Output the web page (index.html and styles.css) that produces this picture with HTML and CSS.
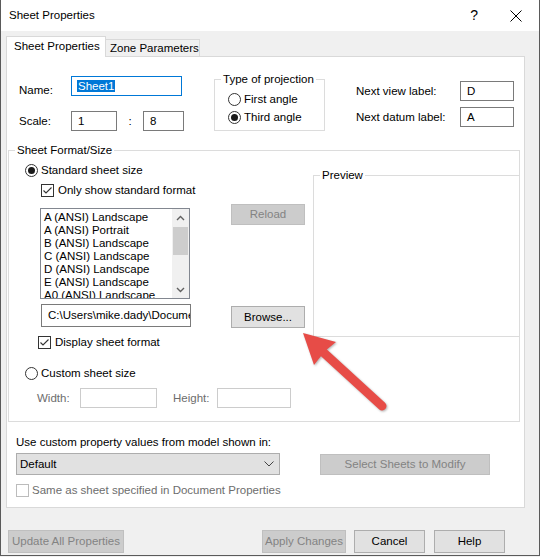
FILE: index.html
```html
<!DOCTYPE html>
<html lang="en">
<head>
    <meta charset="UTF-8">
    <title>Sheet Properties</title>
    <link rel="stylesheet" href="styles.css">
</head>
<body>
    <div class="window">
        <div class="titlebar">
            <span class="title">Sheet Properties</span>
            <span class="help">?</span>
            <svg class="close" width="12" height="12" viewBox="0 0 12 12">
                <path d="M0.5 0.5 L11.5 11.5 M11.5 0.5 L0.5 11.5" stroke="#000" stroke-width="1" fill="none"/>
            </svg>
        </div>

        <div class="tabs">
            <div class="tab active">Sheet Properties</div>
            <div class="tab">Zone Parameters</div>
        </div>

        <div class="panel">
            <!-- name, scale, projection, labels -->
            <div class="top">
                <div class="name-scale">
                    <div class="row name-row">
                        <span class="lbl">Name:</span>
                        <div class="input name-input"><span class="selected">Sheet1</span></div>
                    </div>
                    <div class="row scale-row">
                        <span class="lbl">Scale:</span>
                        <div class="input scale-a">1</div>
                        <span class="colon">:</span>
                        <div class="input scale-b">8</div>
                    </div>
                </div>

                <div class="group projection">
                    <div class="group-title">Type of projection</div>
                    <div class="option first"><span class="radio"></span>First angle</div>
                    <div class="option second"><span class="radio on"></span>Third angle</div>
                </div>

                <div class="labels">
                    <div class="row">
                        <span class="lbl-wide">Next view label:</span>
                        <div class="input short">D</div>
                    </div>
                    <div class="row datum-row">
                        <span class="lbl-wide">Next datum label:</span>
                        <div class="input short">A</div>
                    </div>
                </div>
            </div>

            <!-- sheet format / size -->
            <div class="group format">
                <div class="group-title">Sheet Format/Size</div>
                <div class="format-body">
                    <div class="format-left">
                        <div class="option"><span class="radio on"></span>Standard sheet size</div>
                        <div class="option only-std">
                            <span class="check">
                                <svg width="11" height="11" viewBox="0 0 11 11"><polyline points="1.5,5.5 4,8 9.5,2.5" fill="none" stroke="#333" stroke-width="1.1"/></svg>
                            </span>Only show standard format
                        </div>
                        <div class="list">
                            <div class="list-items">
                                <div>A (ANSI) Landscape</div>
                                <div>A (ANSI) Portrait</div>
                                <div>B (ANSI) Landscape</div>
                                <div>C (ANSI) Landscape</div>
                                <div>D (ANSI) Landscape</div>
                                <div>E (ANSI) Landscape</div>
                                <div>A0 (ANSI) Landscape</div>
                            </div>
                            <div class="scrollbar">
                                <div class="scroll-btn">
                                    <svg width="9" height="6" viewBox="0 0 9 6"><polyline points="1,5 4.5,1.5 8,5" fill="none" stroke="#606060" stroke-width="1.4"/></svg>
                                </div>
                                <div class="thumb"></div>
                                <div class="scroll-btn down">
                                    <svg width="9" height="6" viewBox="0 0 9 6"><polyline points="1,1 4.5,4.5 8,1" fill="none" stroke="#606060" stroke-width="1.4"/></svg>
                                </div>
                            </div>
                        </div>
                        <div class="input path">C:\Users\mike.dady\Docume</div>
                        <div class="option display-fmt">
                            <span class="check">
                                <svg width="11" height="11" viewBox="0 0 11 11"><polyline points="1.5,5.5 4,8 9.5,2.5" fill="none" stroke="#333" stroke-width="1.1"/></svg>
                            </span>Display sheet format
                        </div>
                    </div>

                    <div class="format-buttons">
                        <div class="btn disabled reload">Reload</div>
                        <div class="btn browse">Browse...</div>
                    </div>

                    <div class="group preview">
                        <div class="group-title">Preview</div>
                    </div>
                </div>

                <div class="option custom"><span class="radio"></span>Custom sheet size</div>
                <div class="size-row">
                    <span class="size-lbl width-lbl">Width:</span>
                    <div class="input off width-input"></div>
                    <span class="size-lbl height-lbl">Height:</span>
                    <div class="input off height-input"></div>
                </div>
            </div>

            <!-- custom property source -->
            <div class="prop-label">Use custom property values from model shown in:</div>
            <div class="prop-row">
                <div class="select">
                    <span>Default</span>
                    <svg width="10" height="6" viewBox="0 0 10 6"><polyline points="0.5,0.5 5,5 9.5,0.5" fill="none" stroke="#444" stroke-width="1"/></svg>
                </div>
                <div class="btn disabled select-sheets">Select Sheets to Modify</div>
            </div>
            <div class="option same-row"><span class="check off"></span>Same as sheet specified in Document Properties</div>
        </div>

        <div class="footer">
            <div class="btn disabled update">Update All Properties</div>
            <div class="footer-right">
                <div class="btn disabled apply">Apply Changes</div>
                <div class="btn cancel">Cancel</div>
                <div class="btn help-btn">Help</div>
            </div>
        </div>

        <!-- annotation arrow pointing at Browse -->
        <svg class="arrow" width="110" height="100" viewBox="290 320 110 100">
            <line x1="323" y1="352" x2="382" y2="406" stroke="#e74c47" stroke-width="9" stroke-linecap="round"/>
            <path d="M303 333 L336 342 L325 351 L314 365 Z" fill="#e74c47"/>
        </svg>
    </div>
</body>
</html>
```

FILE: styles.css
```css
* {
    box-sizing: border-box;
}

body {
    margin: 0;
    background-color: #f0f0f0;
    font-family: "Liberation Sans", Arial, sans-serif;
    font-size: 11.5px;
    line-height: 13px;
    color: #000;
}

.window {
    position: relative;
    width: 540px;
    height: 556px;
    background-color: #f0f0f0;
    border-left: 1px solid #5a5a5a;
    border-right: 1px solid #5a5a5a;
    border-bottom: 1px solid #5a5a5a;
}

/* title bar */
.titlebar {
    height: 31px;
    background-color: #fff;
    display: flex;
    align-items: center;
    padding-left: 8px;
    padding-right: 17px;
}
.titlebar .title {
    flex: 1;
}
.titlebar .help {
    font-size: 14px;
    margin-right: 32px;
}

/* tabs */
.tabs {
    display: flex;
    align-items: flex-end;
    height: 20px;
    margin-top: 5px;
    margin-left: 5px;
}
.tab {
    border: 1px solid #d9d9d9;
    border-bottom: none;
    background-color: #f0f0f0;
    width: 95px;
    height: 17px;
    padding-top: 2px;
    padding-left: 4px;
    margin-left: -1px;
    white-space: nowrap;
}
.tab.active {
    position: relative;
    z-index: 1;
    background-color: #fff;
    width: 100px;
    height: 21px;
    margin-left: 0;
    margin-bottom: -1px;
    padding-top: 3px;
    padding-left: 7px;
}

/* panel */
.panel {
    width: 519px;
    height: 452px;
    margin-left: 5px;
    background-color: #fff;
    border: 1px solid #d9d9d9;
}

.top {
    display: flex;
    height: 93px;
    padding-left: 12px;
}
.row {
    display: flex;
    align-items: flex-start;
    white-space: nowrap;
}
.lbl {
    width: 52px;
    line-height: 20px;
}
.name-scale {
    width: 165px;
    padding-top: 19px;
}
.name-row .lbl {
    padding-top: 4px;
}
.scale-row {
    margin-top: 11px;
}
.input {
    height: 20px;
    border: 1px solid #7a7a7a;
    background-color: #fff;
    padding-left: 6px;
    line-height: 18px;
    white-space: nowrap;
    overflow: hidden;
}
.name-input {
    width: 111px;
    border-color: #0078d7;
    padding-left: 5px;
    display: flex;
    align-items: center;
}
.selected {
    background-color: #0078d7;
    color: #fff;
    line-height: 12px;
    padding: 0 1px;
}
.scale-a {
    width: 46px;
}
.colon {
    width: 26px;
    text-align: center;
    line-height: 20px;
}
.scale-b {
    width: 41px;
}

/* group boxes */
.group {
    border: 1px solid #dcdcdc;
}
.group-title {
    display: table;
    margin-top: -7px;
    margin-left: 6px;
    padding: 0 2px;
    background-color: #fff;
    line-height: 13px;
    white-space: nowrap;
}

.projection {
    width: 111px;
    height: 52px;
    margin-left: 30px;
    margin-top: 22px;
}
.option {
    display: flex;
    align-items: center;
    height: 16px;
    white-space: nowrap;
}
.projection .option {
    padding-left: 13px;
}
.projection .first {
    margin-top: 5px;
}
.projection .second {
    margin-top: 2px;
}
.radio {
    width: 13px;
    height: 13px;
    border: 1px solid #333;
    border-radius: 50%;
    margin-right: 3px;
    display: flex;
    align-items: center;
    justify-content: center;
    flex-shrink: 0;
}
.radio.on::after {
    content: "";
    width: 7px;
    height: 7px;
    border-radius: 50%;
    background-color: #1a1a1a;
}
.check {
    width: 13px;
    height: 13px;
    border: 1px solid #333;
    margin-right: 4px;
    display: flex;
    align-items: center;
    justify-content: center;
    flex-shrink: 0;
}
.check.off {
    border-color: #bcbcbc;
}

.labels {
    margin-left: 31px;
    padding-top: 24px;
}
.lbl-wide {
    width: 104px;
    line-height: 20px;
}
.datum-row {
    margin-top: 6px;
}
.input.short {
    width: 54px;
}

/* sheet format */
.format {
    width: 512px;
    height: 272px;
    margin-left: 1px;
}
.format-body {
    display: flex;
    align-items: flex-start;
    margin-top: 5px;
}
.format-left {
    width: 166px;
    flex-shrink: 0;
    margin-left: 16px;
}
.only-std {
    margin-top: 4px;
    padding-left: 16px;
}
.list {
    display: flex;
    width: 150px;
    height: 91px;
    margin-top: 10px;
    margin-left: 15px;
    border: 1px solid #828790;
    overflow: hidden;
}
.list-items {
    flex: 1;
    padding-top: 2px;
    padding-left: 3px;
    white-space: nowrap;
    overflow: hidden;
}
.scrollbar {
    width: 17px;
    background-color: #f0f0f0;
    display: flex;
    flex-direction: column;
}
.scroll-btn {
    height: 17px;
    display: flex;
    align-items: center;
    justify-content: center;
}
.scroll-btn.down {
    margin-top: auto;
}
.thumb {
    height: 28px;
    margin: 1px 1px 0;
    background-color: #cdcdcd;
}
.input.path {
    width: 150px;
    height: 23px;
    margin-top: 5px;
    margin-left: 16px;
    line-height: 21px;
}
.display-fmt {
    margin-top: 7px;
    margin-left: 13px;
}

.format-buttons {
    width: 74px;
    flex-shrink: 0;
    margin-left: 40px;
}
.btn {
    display: flex;
    align-items: center;
    justify-content: center;
    background-color: #e1e1e1;
    border: 1px solid #adadad;
    white-space: nowrap;
}
.btn.disabled {
    background-color: #cccccc;
    border-color: #bfbfbf;
    color: #838383;
}
.reload {
    height: 21px;
    margin-top: 42px;
}
.browse {
    height: 22px;
    margin-top: 81px;
}

.preview {
    width: 207px;
    height: 162px;
    flex-shrink: 0;
    margin-left: 8px;
    margin-top: 13px;
    margin-right: -1px;
}

.custom {
    margin-top: 15px;
    margin-left: 16px;
}
.size-row {
    display: flex;
    align-items: center;
    height: 20px;
    margin-top: 7px;
    color: #6d6d6d;
}
.size-lbl {
    line-height: 20px;
}
.width-lbl {
    width: 43px;
    margin-left: 28px;
}
.height-lbl {
    width: 44px;
    margin-left: 16px;
}
.input.off {
    border-color: #cccccc;
}
.width-input {
    width: 77px;
}
.height-input {
    width: 74px;
}

/* custom property source */
.prop-label {
    margin-top: 14px;
    padding-left: 9px;
}
.prop-row {
    display: flex;
    align-items: flex-start;
    margin-top: 4px;
    padding-left: 9px;
}
.select {
    width: 264px;
    height: 22px;
    display: flex;
    align-items: center;
    justify-content: space-between;
    padding: 0 5px 0 3px;
    background-color: #e1e1e1;
    border: 1px solid #adadad;
}
.select-sheets {
    width: 170px;
    height: 21px;
    margin-top: 1px;
    margin-left: 40px;
}
.same-row {
    margin-top: 7px;
    padding-left: 9px;
    color: #6d6d6d;
}
.same-row .check {
    margin-right: 3px;
}

/* bottom buttons */
.footer {
    display: flex;
    margin-top: 22px;
    padding-left: 7px;
    padding-right: 34px;
}
.footer .btn {
    height: 23px;
}
.update {
    width: 116px;
}
.footer-right {
    display: flex;
    margin-left: auto;
}
.apply {
    width: 84px;
}
.cancel {
    width: 71px;
    margin-left: 8px;
}
.help-btn {
    width: 71px;
    margin-left: 9px;
}

.arrow {
    position: absolute;
    left: 289px;
    top: 320px;
    filter: drop-shadow(1px 1px 1px rgba(0, 0, 0, 0.3));
}
```
